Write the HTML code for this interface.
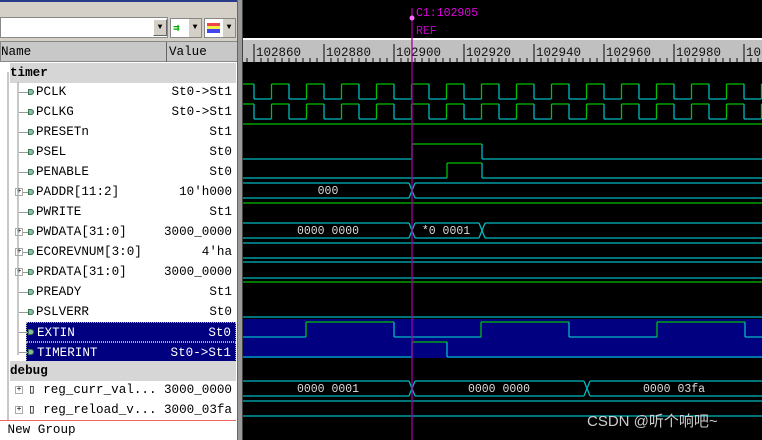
<!DOCTYPE html>
<html><head><meta charset="utf-8"><style>
*{margin:0;padding:0;box-sizing:border-box}
body{width:762px;height:440px;overflow:hidden;background:#000;position:relative;font-family:"Liberation Mono",monospace;font-size:12.6px}
#left{position:absolute;left:0;top:0;width:238px;height:440px;background:#fff}
#tb{position:absolute;left:0;top:0;width:238px;height:41px;background:#d4d0c8;border-top:2px solid #2a3a8a}
.r{position:absolute;left:0;width:238px;height:20px;line-height:20px;color:#000;white-space:pre}
.g{background:#d6d6d6;font-weight:bold}
.sel{background:#000080;color:#fff;border:1px dotted #aaa}
.v{position:absolute;right:4px;top:0}
.n{position:absolute;top:0}
#div{position:absolute;left:237px;top:0;width:6px;height:440px;background:#9a9a9a;border-left:1px solid #666;border-right:1px solid #444}
svg{position:absolute;left:0;top:0}
</style></head><body>
<div id="left">
<div id="tb">
 <div style="position:absolute;left:0;top:15px;width:168px;height:21px;background:#fff;border:1px solid #888"></div>
 <div style="position:absolute;left:153px;top:17px;width:14px;height:17px;background:#d4d0c8;border:1px solid #fff;border-right-color:#666;border-bottom-color:#666;font-size:8px;text-align:center;line-height:15px">▼</div>
 <div style="position:absolute;left:170px;top:16px;width:32px;height:20px;background:#fff;border:1px solid #888"></div>
 <div style="position:absolute;left:173px;top:19px;color:#0a0;font-size:11px;font-weight:bold">⇉</div>
 <div style="position:absolute;left:189px;top:17px;width:12px;height:18px;background:#d4d0c8;font-size:8px;text-align:center;line-height:18px">▼</div>
 <div style="position:absolute;left:204px;top:16px;width:32px;height:20px;background:#fff;border:1px solid #888"></div>
 <div style="position:absolute;left:207px;top:21px;width:13px;height:10px;background:linear-gradient(#e44 0 30%,#ee4 30% 60%,#44e 60%)"></div>
 <div style="position:absolute;left:223px;top:17px;width:12px;height:18px;background:#d4d0c8;font-size:8px;text-align:center;line-height:18px">▼</div>
</div>
<div class="r" style="top:41px;background:#c8c8c8;border:1px solid #888;height:21px">Name<div style="position:absolute;left:165px;top:0;width:1px;height:20px;background:#666"></div><span class="n" style="left:168px">Value</span></div>
<div class="r g" style="top:63px;left:10px;width:226px">timer</div>
<div id="rows"></div>
<div class="r g" style="top:361px;left:10px;width:226px">debug</div>
<div style="position:absolute;left:0;top:420px;width:236px;height:1px;background:#e66"></div>
<div class="r" style="top:420px"> New Group</div>
</div>
<div id="div"></div>
<svg id="w" width="762" height="440"></svg>
<script>
var rows=[["PCLK","St0->St1"],["PCLKG","St0->St1"],["PRESETn","St1"],["PSEL","St0"],["PENABLE","St0"],["PADDR[11:2]","10'h000",1],["PWRITE","St1"],["PWDATA[31:0]","3000_0000",1],["ECOREVNUM[3:0]","4'ha",1],["PRDATA[31:0]","3000_0000",1],["PREADY","St1"],["PSLVERR","St0"],["EXTIN","St0",0,1],["TIMERINT","St0->St1",0,1]];
var h="";rows.forEach(function(r,i){var t=82+i*20;h+='<div class="r'+(r[3]?' sel':'')+'" style="top:'+t+'px;left:26px;width:210px"><span class="n" style="left:10px">'+r[0]+'</span><span class="v">'+r[1]+'</span></div>';
h+='<div style="position:absolute;left:28px;top:'+(t+7)+'px;width:6px;height:6px;background:#8fb8a0;border:1px solid #375;border-radius:0 3px 3px 0"></div>';
h+='<div style="position:absolute;left:19px;top:'+(t+10)+'px;width:9px;height:1px;background:#999"></div>';
if(r[2])h+='<div style="position:absolute;left:15px;top:'+(t+6)+'px;width:8px;height:8px;background:#fff;border:1px solid #aaa;font-size:8px;line-height:6px;text-align:center;color:#000">+</div>';});
[["reg_curr_val...","3000_0000"],["reg_reload_v...","3000_03fa"]].forEach(function(r,i){var t=380+i*20;h+='<div class="r" style="top:'+t+'px;left:26px;width:210px"><span class="n" style="left:2px">▯ '+r[0]+'</span><span class="v">'+r[1]+'</span></div>';
h+='<div style="position:absolute;left:15px;top:'+(t+6)+'px;width:8px;height:8px;background:#fff;border:1px solid #aaa;font-size:8px;line-height:6px;text-align:center;color:#000">+</div>';});
document.getElementById("rows").innerHTML=h;
var s="";function L(x1,y1,x2,y2,c){s+='<line x1="'+x1+'" y1="'+y1+'" x2="'+x2+'" y2="'+y2+'" stroke="'+c+'" stroke-width="1.3"/>'}
function T(x,y,t,c,sz,a){s+='<text x="'+x+'" y="'+y+'" fill="'+c+'" font-family="Liberation Mono,monospace" font-size="'+sz+'"'+(a?' text-anchor="middle"':'')+'>'+t+'</text>'}
L(8,72,8,420,"#aaa");L(18,82,18,355,"#aaa");
s+='<rect x="243" y="38" width="519" height="2" fill="#fff"/><rect x="243" y="40" width="519" height="22" fill="#c0c0c0"/>';
for(var x=247;x<762;x+=7)L(x,(x-254)%70==0?44:58,x,62,"#333");
for(var k=0;k<8;k++)T(256+k*70,56,(102860+k*20)+"","#111",12.5);
s+='<rect x="243" y="319" width="519" height="39" fill="#000080"/>';
var G="#00c000",C="#00b8c0";
function clk(yh,yl){
 for(var x=254;x<762;x+=35){L(x,yh,x,yl,C);L(x,yl,Math.min(762,x+17.5),yl,C);if(x+17.5<762){L(x+17.5,yl,x+17.5,yh,G);L(x+17.5,yh,Math.min(762,x+35),yh,G);}}
 L(243,yh,254,yh,G);}
clk(84,99);clk(104,119);
L(243,124,762,124,G);
L(243,159,412,159,C);L(412,159,412,144,G);L(412,144,482,144,G);L(482,144,482,159,C);L(482,159,762,159,C);
L(243,178,447,178,C);L(447,178,447,163,G);L(447,163,482,163,G);L(482,163,482,178,C);L(482,178,762,178,C);
function bus(yt,yb,xs){var p=[243].concat(xs).concat([762]);for(var i=0;i<p.length-1;i++){var a=p[i]+(i?3:0),b=p[i+1]-(i<p.length-2?3:0);L(a,yt,b,yt,C);L(a,yb,b,yb,C);if(i<p.length-2){L(b,yt,p[i+1]+3,yb,C);L(b,yb,p[i+1]+3,yt,C);}}}
bus(183,198,[412]);T(328,194,"000","#ddd",11.5,1);
L(243,203,762,203,G);
bus(223,238,[412,482]);T(328,234,"0000 0000","#ddd",11.5,1);T(446,234,"*0 0001","#ddd",11.5,1);
L(243,243,762,243,C);L(243,258,762,258,C);L(243,262,762,262,C);L(243,278,762,278,C);L(243,282,762,282,G);
L(243,317,762,317,C);
var e=[306,394,481,569,657,745],st=0,px=243;
for(var i=0;i<=e.length;i++){var nx=i<e.length?e[i]:762;L(px,st?322:337,nx,st?322:337,st?G:C);if(i<e.length){L(nx,322,nx,337,st?C:G);st=1-st;px=nx;}}
L(243,357,412,357,C);L(412,357,412,342,G);L(412,342,447,342,G);L(447,342,447,357,C);L(447,357,762,357,C);
bus(381,396,[412,587]);T(328,392,"0000 0001","#ddd",11.5,1);T(499,392,"0000 0000","#ddd",11.5,1);T(674,392,"0000 03fa","#ddd",11.5,1);
L(243,401,762,401,C);L(243,416,762,416,C);
L(412,8,412,440,"#a000a0");s+='<circle cx="412" cy="18" r="2.5" fill="#f6f"/>';
T(416,16,"C1:102905","#e000e0",11.5);T(416,34,"REF","#c000c0",11.5);
s+='<text x="587" y="426" fill="#ccc" font-family="Liberation Sans,Noto Sans CJK SC,sans-serif" font-size="15">CSDN @听个响吧~</text>';
document.getElementById("w").innerHTML=s;
</script>
</body></html>
